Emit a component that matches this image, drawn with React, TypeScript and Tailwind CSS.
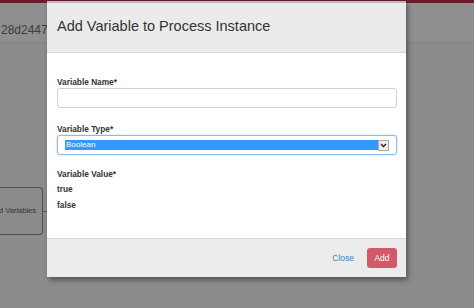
import React from "react";

export default function App() {
  const font = { fontFamily: '"Liberation Sans", Arial, sans-serif' };
  return (
    <div className="relative w-[474px] h-[308px] overflow-hidden bg-[#8b8b8b]" style={font}>
      {/* page behind overlay */}
      <div className="h-[3px] bg-[#6a1d2a]" />
      <div className="h-[40px] bg-[#8f8f8f] border-b border-[#858585] flex items-center">
        <span className="text-[12px] text-[#3b3b3b] pl-[1px] pt-[15px] whitespace-nowrap">28d24473</span>
      </div>
      <div className="flex items-center mt-[144px]">
        <div className="w-[43px] h-[48px] border border-[#4f4f4f] rounded-r-[4px] border-l-0 flex items-center justify-end pr-[6px] shrink-0">
          <span className="text-[7.5px] text-[#333] whitespace-nowrap">d Variables</span>
        </div>
        <div className="w-[6px] h-px bg-[#555]" />
      </div>

      {/* modal */}
      <div className="absolute left-[47px] top-[1px] w-[359px] h-[276px] flex flex-col bg-white border-t-2 border-[#bcbcbc] shadow-[2px_3px_5px_rgba(0,0,0,0.4)]">
        <div className="h-[50px] bg-[#ebebeb] border-b border-[#d6d6d6] flex items-center pl-[10px] pb-[1px]">
          <span className="text-[14.5px] text-[#333]">Add Variable to Process Instance</span>
        </div>
        <div className="flex-1 flex flex-col px-[10px] pr-[9px]">
          <div className="mt-[24px] h-[10px] text-[8.3px] leading-[10px] font-bold text-[#333]">Variable Name*</div>
          <div className="mt-[1px] h-[20px] border border-[#d0d0d0] rounded-[3px] bg-white" />
          <div className="mt-[16px] h-[10px] text-[8.3px] leading-[10px] font-bold text-[#333]">Variable Type*</div>
          <div className="mt-[1px] h-[20px] border border-[#8fbce6] rounded-[3px] bg-white shadow-[0_0_2px_rgba(102,175,233,0.6)] flex items-center pl-[7px] pr-[7px]">
            <div className="flex-1 h-[10px] bg-[#3399ff] flex items-center pl-[1px]">
              <span className="text-[8px] text-white leading-none">Boolean</span>
            </div>
            <div className="w-[11px] h-[11px] border border-[#a9a9a9] bg-[#eeeeee] flex items-center justify-center">
              <svg width="7" height="5" viewBox="0 0 7 5">
                <path d="M1 1 L3.5 3.5 L6 1" fill="none" stroke="#222" strokeWidth="1.4" />
              </svg>
            </div>
          </div>
          <div className="mt-[14px] h-[10px] text-[8.3px] leading-[10px] font-bold text-[#333]">Variable Value*</div>
          <div className="mt-[5px] h-[10px] text-[8.3px] leading-[10px] font-bold text-[#333]">true</div>
          <div className="mt-[6px] h-[10px] text-[8.3px] leading-[10px] font-bold text-[#333]">false</div>
        </div>
        <div className="h-[39px] bg-[#ececec] border-t border-[#d8d8d8] flex items-center justify-end pr-[9px] gap-[13px]">
          <span className="text-[8.5px] text-[#3f7fbf]">Close</span>
          <div className="w-[30px] h-[20px] bg-[#d15968] rounded-[3px] flex items-center justify-center">
            <span className="text-[8.5px] text-white">Add</span>
          </div>
        </div>
      </div>
    </div>
  );
}
